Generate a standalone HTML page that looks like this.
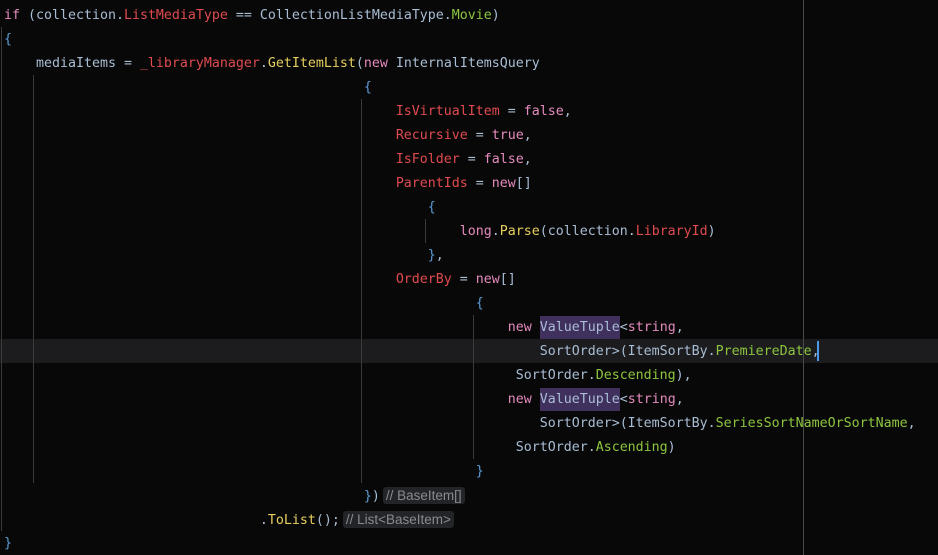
<!DOCTYPE html>
<html><head><meta charset="utf-8"><style>
html,body{margin:0;padding:0;background:#080808;width:938px;height:555px;overflow:hidden;position:relative}
.l{position:absolute;left:4px;height:24px;line-height:24px;white-space:pre;font-family:"DejaVu Sans Mono","Liberation Mono",monospace;font-size:13.29px;color:#a9bdd4}
.k{color:#e58bbd}
.p{color:#e04b4f}
.m{color:#e6cf5e}
.g{color:#8cc63f}
.b{color:#5b9bd5}
.t{background:#40305e;padding:4px 0}
.hl{position:absolute;left:0;top:339px;width:938px;height:24px;background:#1c1c1e}
.v{position:absolute;width:1px;background:#3a3a3a}
.hint{font-family:"Liberation Sans",sans-serif;font-size:13.5px;color:#8a8a8f;background:#232428;border-radius:3px;padding:1px 3px;margin-left:3px}
.cur{position:absolute;left:817px;top:341px;width:2px;height:20px;background:#4a9aea}
</style></head><body>
<div class="hl"></div>
<div class="v" style="left:1px;top:27px;height:504px"></div>
<div class="v" style="left:33px;top:75px;height:408px"></div>
<div class="v" style="left:361px;top:99px;height:384px"></div>
<div class="v" style="left:425px;top:219px;height:24px"></div>
<div class="v" style="left:473px;top:315px;height:144px"></div>
<div class="v" style="left:803px;top:0;height:555px;background:#4a4a4a"></div>
<div class="cur"></div>
<div class="l" style="top:4px"><span class="k">if</span> (collection.<span class="p">ListMediaType</span> == CollectionListMediaType.<span class="g">Movie</span>)</div>
<div class="l" style="top:28px"><span class="b">{</span></div>
<div class="l" style="top:52px">    mediaItems = <span class="p">_libraryManager</span>.<span class="m">GetItemList</span>(<span class="k">new</span> InternalItemsQuery</div>
<div class="l" style="top:76px">                                             <span class="b">{</span></div>
<div class="l" style="top:100px">                                                 <span class="p">IsVirtualItem</span> = <span class="k">false</span>,</div>
<div class="l" style="top:124px">                                                 <span class="p">Recursive</span> = <span class="k">true</span>,</div>
<div class="l" style="top:148px">                                                 <span class="p">IsFolder</span> = <span class="k">false</span>,</div>
<div class="l" style="top:172px">                                                 <span class="p">ParentIds</span> = <span class="k">new</span>[]</div>
<div class="l" style="top:196px">                                                     <span class="b">{</span></div>
<div class="l" style="top:220px">                                                         <span class="k">long</span>.<span class="m">Parse</span>(collection.<span class="p">LibraryId</span>)</div>
<div class="l" style="top:244px">                                                     <span class="b">}</span>,</div>
<div class="l" style="top:268px">                                                 <span class="p">OrderBy</span> = <span class="k">new</span>[]</div>
<div class="l" style="top:292px">                                                           <span class="b">{</span></div>
<div class="l" style="top:316px">                                                               <span class="k">new</span> <span class="t">ValueTuple</span>&lt;<span class="k">string</span>,</div>
<div class="l" style="top:340px">                                                                   SortOrder&gt;(ItemSortBy.<span class="g">PremiereDate</span>,</div>
<div class="l" style="top:364px">                                                                SortOrder.<span class="g">Descending</span>),</div>
<div class="l" style="top:388px">                                                               <span class="k">new</span> <span class="t">ValueTuple</span>&lt;<span class="k">string</span>,</div>
<div class="l" style="top:412px">                                                                   SortOrder&gt;(ItemSortBy.<span class="g">SeriesSortNameOrSortName</span>,</div>
<div class="l" style="top:436px">                                                                SortOrder.<span class="g">Ascending</span>)</div>
<div class="l" style="top:460px">                                                           <span class="b">}</span></div>
<div class="l" style="top:484px">                                             <span class="b">}</span>)<span class="hint">// BaseItem[]</span></div>
<div class="l" style="top:508px">                                .<span class="m">ToList</span>();<span class="hint">// List&lt;BaseItem&gt;</span></div>
<div class="l" style="top:532px"><span class="b">}</span></div>
</body></html>
